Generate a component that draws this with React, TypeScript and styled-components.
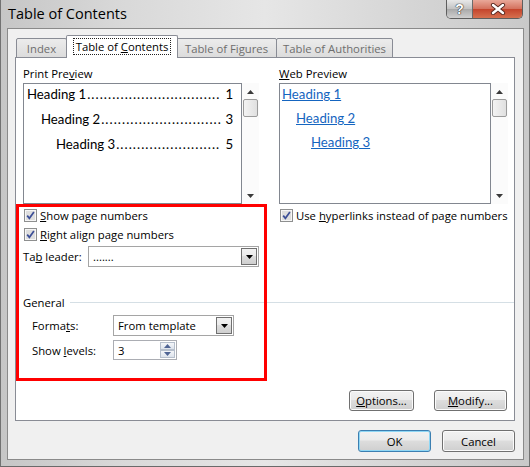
import styled, { createGlobalStyle } from "styled-components";

const GlobalStyle = createGlobalStyle`
  html, body { margin: 0; padding: 0; }
  body {
    font-family: "Open Sans", "Noto Sans", sans-serif;
    font-size: 11.3px;
    color: #000;
  }
  * { box-sizing: border-box; }
`;

// dots = how many leader dots fit between the heading and its page number
const printPreview = [
  { name: "Heading 1", page: 1, indent: 0, dots: 32 },
  { name: "Heading 2", page: 3, indent: 14, dots: 29 },
  { name: "Heading 3", page: 5, indent: 29, dots: 25 },
];

const tabs = [
  { label: "Index", width: 51 },
  { label: "Table of Contents", width: 112, active: true },
  { label: "Table of Figures", width: 101 },
  { label: "Table of Authorities", width: 117 },
];

function CheckBox() {
  return (
    <svg width="13" height="13" viewBox="0 0 13 13">
      <rect x="0.5" y="0.5" width="12" height="12" fill="#f6f6f6" stroke="#8e8f8f" />
      <rect x="2" y="2" width="9" height="9" fill="#dedede" />
      <path d="M3.2 6.6 L5.4 9.3 L9.9 3" fill="none" stroke="#3b4e97" strokeWidth="1.7" />
    </svg>
  );
}

function DropArrow() {
  return (
    <svg width="7" height="4" viewBox="0 0 7 4">
      <path d="M0 0 H7 L3.5 4 Z" fill="#000" />
    </svg>
  );
}

function ScrollBar() {
  return (
    <Scroll>
      <svg width="7" height="4" viewBox="0 0 7 4" style={{ marginTop: 7 }}>
        <path d="M0 4 H7 L3.5 0 Z" fill="#3a3a3a" />
      </svg>
      <Thumb />
      <Spacer />
      <svg width="7" height="4" viewBox="0 0 7 4" style={{ marginBottom: 6 }}>
        <path d="M0 0 H7 L3.5 4 Z" fill="#3a3a3a" />
      </svg>
    </Scroll>
  );
}

function App() {
  return (
    <>
      <GlobalStyle />
      <Window>
        <TitleBar>
          <Caption>Table of Contents</Caption>
          <CaptionButtons>
            <HelpButton>?</HelpButton>
            <CloseButton>
              <svg width="16" height="12" viewBox="0 0 16 12">
                <path d="M3 2 L13 10 M13 2 L3 10" stroke="#5a2a22" strokeWidth="4.2" strokeLinecap="round" />
                <path d="M3 2 L13 10 M13 2 L3 10" stroke="#fff" strokeWidth="2.4" strokeLinecap="round" />
              </svg>
            </CloseButton>
          </CaptionButtons>
        </TitleBar>

        <Client>
          <TabStrip>
            {tabs.map((t) => (
              <Tab key={t.label} $w={t.width} $active={t.active}>
                {t.active ? (
                  <Focus>Table of <u>C</u>ontents</Focus>
                ) : (
                  t.label
                )}
              </Tab>
            ))}
          </TabStrip>

          <Panel>
            <Columns>
              <Column $w={236}>
                <Label>Print Pre<u>v</u>iew</Label>
                <PreviewRow>
                  <PreviewBox $w={220}>
                    {printPreview.map((h) => (
                      <TocLine key={h.name} $indent={h.indent}>
                        <span>{h.name}</span>
                        <Dots>{".".repeat(h.dots)}</Dots>
                        <PageNo>{h.page}</PageNo>
                      </TocLine>
                    ))}
                  </PreviewBox>
                  <ScrollBar />
                </PreviewRow>
                <CheckRow>
                  <CheckBox />
                  <span><u>S</u>how page numbers</span>
                </CheckRow>
                <CheckRow>
                  <CheckBox />
                  <span><u>R</u>ight align page numbers</span>
                </CheckRow>
                <FieldRow>
                  <FieldLabel $w={65}>Ta<u>b</u> leader:</FieldLabel>
                  <Select $w={171}>
                    <SelectText>.......</SelectText>
                    <ArrowButton><DropArrow /></ArrowButton>
                  </Select>
                </FieldRow>
              </Column>

              <Column $w={229}>
                <Label><u>W</u>eb Preview</Label>
                <PreviewRow>
                  <PreviewBox $w={212} $web>
                    {printPreview.map((h) => (
                      <WebLine key={h.name} $indent={h.indent}>
                        {h.name}
                      </WebLine>
                    ))}
                  </PreviewBox>
                  <ScrollBar />
                </PreviewRow>
                <CheckRow>
                  <CheckBox />
                  <span>Use <u>h</u>yperlinks instead of page numbers</span>
                </CheckRow>
              </Column>
            </Columns>

            <GroupHeader>
              <span>General</span>
              <GroupLine />
            </GroupHeader>
            <GroupRow $top={5} $h={21}>
              <FieldLabel $w={81}>Forma<u>t</u>s:</FieldLabel>
              <Select $w={121}>
                <SelectText>From template</SelectText>
                <ArrowButton><DropArrow /></ArrowButton>
              </Select>
            </GroupRow>
            <GroupRow $top={4} $h={20}>
              <FieldLabel $w={81}>Show <u>l</u>evels:</FieldLabel>
              <Spin>
                <SelectText>3</SelectText>
                <SpinButtons>
                  <SpinButton>
                    <svg width="7" height="4" viewBox="0 0 7 4"><path d="M0 4 H7 L3.5 0 Z" fill="#4f6494" /></svg>
                  </SpinButton>
                  <SpinButton>
                    <svg width="7" height="4" viewBox="0 0 7 4"><path d="M0 0 H7 L3.5 4 Z" fill="#4f6494" /></svg>
                  </SpinButton>
                </SpinButtons>
              </Spin>
            </GroupRow>

            <PanelButtons>
              <Button $w={65}><u>O</u>ptions...</Button>
              <Button $w={73}><u>M</u>odify...</Button>
            </PanelButtons>

            <Highlight />
          </Panel>

          <DialogButtons>
            <Button $w={73} $h={22} $default>OK</Button>
            <Button $w={73} $h={22}>Cancel</Button>
          </DialogButtons>
        </Client>
      </Window>
    </>
  );
}

const Window = styled.div`
  width: 530px;
  height: 467px;
  display: flex;
  flex-direction: column;
  padding: 0 5px 6px 6px;
  border-left: 1px solid #727272;
  border-right: 1px solid #727272;
  border-bottom: 1px solid #6a6a6a;
  background: linear-gradient(90deg, #c6c6c6 0%, #d8d8d8 22%, #e6e6e6 50%, #d5d5d5 78%, #c9c9c9 100%);
`;

const TitleBar = styled.div`
  height: 28px;
  display: flex;
  align-items: flex-start;
  padding-left: 1px;
`;

const Caption = styled.div`
  font-size: 14.5px;
  line-height: 28px;
  color: #000;
`;

const CaptionButtons = styled.div`
  margin-left: auto;
  margin-right: 1px;
  display: flex;
  height: 19px;
  border: 1px solid #5e5e5e;
  border-top: none;
  border-radius: 0 0 5px 5px;
  overflow: hidden;
`;

const HelpButton = styled.div`
  width: 26px;
  display: flex;
  align-items: center;
  justify-content: center;
  border-right: 1px solid #6b6b6b;
  background: linear-gradient(#e8e8e8, #c2c2c2 50%, #a9a9a9 51%, #cfcfcf);
  font-family: "Liberation Sans", sans-serif;
  font-weight: bold;
  font-size: 14px;
  color: #fff;
  text-shadow: 0 0 1px #333, 0 0 1px #333, 0 0 1px #333;
`;

const CloseButton = styled.div`
  width: 49px;
  display: flex;
  align-items: center;
  justify-content: center;
  background: linear-gradient(#e9a899, #d3705c 50%, #c4442c 51%, #d6704f);
`;

const Client = styled.div`
  flex: 1;
  display: flex;
  flex-direction: column;
  background: #f0f0f0;
  border: 1px solid #8a8a8a;
  padding: 6px 8px 0 7px;
`;

const TabStrip = styled.div`
  position: relative;
  z-index: 1;
  height: 23px;
  margin-bottom: -1px;
  padding-left: 1px;
  display: flex;
  align-items: flex-end;
`;

const Tab = styled.div<{ $w: number; $active?: boolean }>`
  width: ${({ $w }) => $w}px;
  height: ${({ $active }) => ($active ? 23 : 20)}px;
  margin-left: -1px;
  margin-right: ${({ $active }) => ($active ? -1 : 0)}px;
  position: relative;
  z-index: ${({ $active }) => ($active ? 2 : 1)};
  display: flex;
  align-items: center;
  justify-content: center;
  border: 1px solid #898c95;
  border-bottom: ${({ $active }) => ($active ? "none" : "1px solid #898c95")};
  border-radius: 2px 2px 0 0;
  background: ${({ $active }) =>
    $active ? "#fff" : "linear-gradient(#ececec, #dcdcdc)"};
  color: ${({ $active }) => ($active ? "#000" : "#6e6e6e")};
  padding-bottom: ${({ $active }) => ($active ? 1 : 0)}px;

  &:first-child { margin-left: 0; }
`;

const Focus = styled.span`
  border: 1px dotted #222;
  padding: 0 2px;
  line-height: 15px;
`;

const Panel = styled.div`
  position: relative;
  width: 500px;
  height: 364px;
  display: flex;
  flex-direction: column;
  padding: 8px 7px 9px 7px;
  background: #fff;
  border: 1px solid #898c95;
`;

const Columns = styled.div`
  display: flex;
  gap: 20px;
`;

const Column = styled.div<{ $w: number }>`
  width: ${({ $w }) => $w}px;
  display: flex;
  flex-direction: column;
`;

const Label = styled.div`
  height: 16px;
  line-height: 16px;
`;

const PreviewRow = styled.div`
  margin-top: 1px;
  height: 121px;
  display: flex;
`;

const PreviewBox = styled.div<{ $w: number; $web?: boolean }>`
  width: ${({ $w }) => $w}px;
  height: 100%;
  border: 1px solid #828790;
  padding: 0 ${({ $web }) => ($web ? 4 : 8)}px 0 ${({ $web }) => ($web ? 2 : 3)}px;
  display: flex;
  flex-direction: column;
  gap: ${({ $web }) => ($web ? 4 : 5)}px;
  font-family: Lato, "Open Sans", sans-serif;
  font-size: 13.2px;
  background: #fff;
`;

const TocLine = styled.div<{ $indent: number }>`
  height: 20px;
  line-height: 20px;
  display: flex;
  padding-left: ${({ $indent }) => $indent}px;
  white-space: nowrap;
`;

const Dots = styled.span`
  letter-spacing: 1.05px;
  margin-left: 1px;
`;

const PageNo = styled.span`
  margin-left: auto;
`;

const WebLine = styled.div<{ $indent: number }>`
  height: 20px;
  line-height: 20px;
  padding-left: ${({ $indent }) => $indent}px;
  color: #1565c0;
  text-decoration: underline;
`;

const Scroll = styled.div`
  width: 17px;
  display: flex;
  flex-direction: column;
  align-items: center;
  background: #fbfbfb;
`;

const Thumb = styled.div`
  width: 15px;
  height: 18px;
  margin-top: 5px;
  border: 1px solid #9b9b9b;
  border-radius: 2px;
  background: linear-gradient(90deg, #f3f3f3, #e0e0e0);
`;

const Spacer = styled.div`
  flex: 1;
`;

const CheckRow = styled.div`
  height: 19px;
  margin-top: 2px;
  display: flex;
  align-items: center;
  gap: 3px;
  padding-left: 1px;
  white-space: nowrap;

  & + & { margin-top: 0; }
`;

const FieldRow = styled.div`
  margin-top: 2px;
  display: flex;
  align-items: center;
`;

const FieldLabel = styled.div<{ $w: number }>`
  width: ${({ $w }) => $w}px;
  white-space: nowrap;
`;

const Select = styled.div<{ $w: number }>`
  width: ${({ $w }) => $w}px;
  height: 21px;
  display: flex;
  align-items: center;
  border: 1px solid #a5a5a5;
  background: #fff;
  padding: 1px;
`;

const SelectText = styled.div`
  flex: 1;
  padding-left: 3px;
`;

const ArrowButton = styled.div`
  width: 16px;
  height: 17px;
  display: flex;
  align-items: center;
  justify-content: center;
  border: 1px solid #707070;
  background: linear-gradient(#f2f2f2, #ebebeb 45%, #dddddd 50%, #cfcfcf);
`;

const GroupHeader = styled.div`
  margin-top: 27px;
  margin-right: -7px;
  height: 16px;
  display: flex;
  align-items: center;
`;

const GroupLine = styled.div`
  flex: 1;
  height: 1px;
  margin-left: 5px;
  background: #d5dfe5;
`;

const GroupRow = styled.div<{ $top: number; $h: number }>`
  margin-top: ${({ $top }) => $top}px;
  height: ${({ $h }) => $h}px;
  padding-left: 9px;
  display: flex;
  align-items: center;
`;

const Spin = styled.div`
  width: 64px;
  height: 20px;
  display: flex;
  border: 1px solid #abadb3;
  padding: 1px;
  align-items: center;
`;

const SpinButtons = styled.div`
  width: 15px;
  height: 16px;
  display: flex;
  flex-direction: column;
`;

const SpinButton = styled.div`
  flex: 1;
  display: flex;
  align-items: center;
  justify-content: center;
  border: 1px solid #b6bfcc;
  background: linear-gradient(#f4f6f9, #dde3ec);
`;

const PanelButtons = styled.div`
  margin-top: auto;
  display: flex;
  justify-content: flex-end;
  gap: 20px;
`;

const DialogButtons = styled.div`
  margin-top: 9px;
  display: flex;
  justify-content: flex-end;
  gap: 11px;
`;

const Button = styled.button<{ $w: number; $h?: number; $default?: boolean }>`
  width: ${({ $w }) => $w}px;
  height: ${({ $h }) => $h ?? 21}px;
  padding: 0;
  font: inherit;
  color: #000;
  border: 1px solid ${({ $default }) => ($default ? "#3c7fb1" : "#707070")};
  border-radius: 3px;
  background: linear-gradient(#f2f2f2, #ebebeb 45%, #dddddd 50%, #cfcfcf);
  box-shadow: inset 0 0 0 1px ${({ $default }) => ($default ? "#8fd7f5" : "#fbfbfb")};
`;

const Highlight = styled.div`
  position: absolute;
  left: 0;
  top: 146px;
  width: 251px;
  height: 177px;
  border: 3px solid #ff0000;
  pointer-events: none;
`;

export default App;
